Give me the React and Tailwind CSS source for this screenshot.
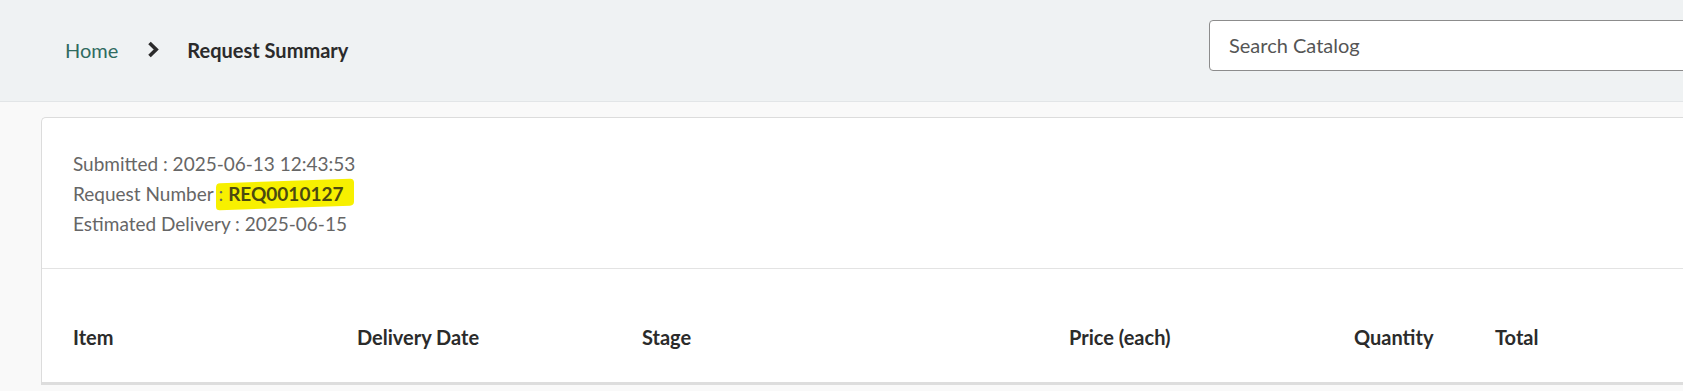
import React from "react";

const columns = [
  { label: "Item", w: "w-[284px]" },
  { label: "Delivery Date", w: "w-[285px]" },
  { label: "Stage", w: "w-[427px]" },
  { label: "Price (each)", w: "w-[285px]" },
  { label: "Quantity", w: "w-[141px]" },
  { label: "Total", w: "w-[285px]" },
];

const App = () => {
  return (
    <div className="w-[1683px] h-[391px] overflow-hidden bg-[#f9f9f9] font-['Lato',sans-serif]">
      {/* Breadcrumb bar */}
      <div className="h-[102px] bg-[#eff2f3] border-b border-[#e2e5e7] flex items-center justify-between pl-[65px]">
        <nav className="flex items-center text-[20px] -mt-[2px]">
          <a className="text-[#2f6b60]">Home</a>
          <svg className="ml-[29px] mr-[28px]" width="12" height="17" viewBox="0 0 12 17">
            <path d="M2.5 2 L9.2 8.5 L2.5 15" fill="none" stroke="#2b2b2b" strokeWidth="3.6" />
          </svg>
          <span className="font-bold text-[#2b2b2b]">Request Summary</span>
        </nav>
        <div className="w-[480px] h-[51px] -mt-[11px] -mr-[6px] bg-white border border-[#8c8c8c] rounded-[4px] flex items-center pl-[19px]">
          <span className="text-[20px] text-[#555]">Search Catalog</span>
        </div>
      </div>

      {/* Card */}
      <div className="ml-[41px] mt-[15px] w-[1700px] bg-white border-l border-t border-[#dcdcdc] rounded-tl-[5px]">
        <div className="pl-[31px] pt-[31px] pb-[29px] text-[19px] leading-[30px] text-[#666]">
          <div>Submitted : 2025-06-13 12:43:53</div>
          <div>
            Request Number
            <span className="relative inline-block">
              <span className="absolute left-[2px] right-[-10px] top-[2px] bottom-[1px] bg-[#f7f000] -skew-y-2 rounded-[4px]"></span>
              <span className="relative whitespace-pre">
                {" : "}<span className="font-bold text-[#4b4a10]">REQ0010127</span>
              </span>
            </span>
          </div>
          <div>Estimated Delivery : 2025-06-15</div>
        </div>
        <div className="border-t border-[#e3e3e3] border-b-[3px] border-b-[#dddddd] h-[117px] flex items-end pb-[30px] pl-[31px]">
          {columns.map((c) => (
            <div key={c.label} className={`${c.w} shrink-0 text-[20px] font-bold text-[#2b2b2b]`}>
              {c.label}
            </div>
          ))}
        </div>
      </div>
    </div>
  );
};

export default App;
